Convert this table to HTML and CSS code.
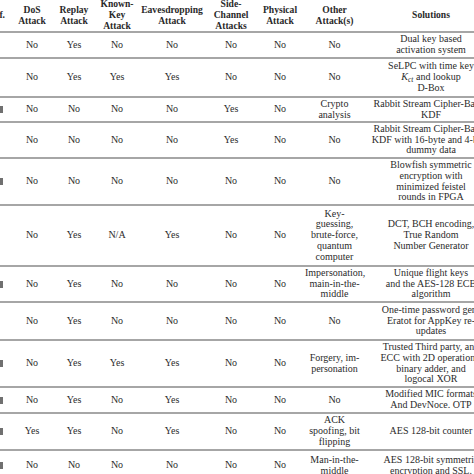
FILE: index.html
```html
<!DOCTYPE html>
<html>
<head>
<meta charset="utf-8">
<link rel="stylesheet" href="styles.css">
</head>
<body>
<div class="viewport">
<table class="grid">
  <colgroup>
    <col class="c-ref"><col class="c-dos"><col class="c-replay"><col class="c-known"><col class="c-eaves"><col class="c-side"><col class="c-phys"><col class="c-other"><col class="c-sol">
  </colgroup>
  <thead>
    <tr class="r35">
      <th class="ref-cell">Ref.</th>
      <th>DoS<br>Attack</th>
      <th>Replay<br>Attack</th>
      <th>Known-<br>Key<br>Attack</th>
      <th>Eavesdropping<br>Attack</th>
      <th>Side-<br>Channel<br>Attacks</th>
      <th>Physical<br>Attack</th>
      <th>Other<br>Attack(s)</th>
      <th>Solutions</th>
    </tr>
  </thead>
  <tbody>
    <tr class="r26">
      <td class="ref-cell"></td><td>No</td><td>Yes</td><td>No</td><td>No</td><td>No</td><td>No</td><td>No</td>
      <td>Dual key based<br>activation system</td>
    </tr>
    <tr class="r39">
      <td class="ref-cell"></td><td>No</td><td>Yes</td><td>Yes</td><td>Yes</td><td>No</td><td>No</td><td>No</td>
      <td>SeLPC with time key<br><i>K</i><span class="subs">ct</span> and lookup<br>D-Box</td>
    </tr>
    <tr class="r25">
      <td class="ref-cell"><span class="ref"></span></td><td>No</td><td>No</td><td>No</td><td>No</td><td>Yes</td><td>No</td><td>Crypto<br>analysis</td>
      <td>Rabbit Stream Cipher-Based<br>KDF</td>
    </tr>
    <tr class="r36">
      <td class="ref-cell"></td><td>No</td><td>No</td><td>No</td><td>No</td><td>Yes</td><td>No</td><td>No</td>
      <td>Rabbit Stream Cipher-Based<br>KDF with 16-byte and 4-byte<br>dummy data</td>
    </tr>
    <tr class="r47">
      <td class="ref-cell"><span class="ref"></span></td><td>No</td><td>No</td><td>No</td><td>No</td><td>No</td><td>No</td><td>No</td>
      <td>Blowfish symmetric<br>encryption with<br>minimized feistel<br>rounds in FPGA</td>
    </tr>
    <tr class="r61">
      <td class="ref-cell"></td><td>No</td><td>Yes</td><td>N/A</td><td>Yes</td><td>No</td><td>No</td>
      <td>Key-<br>guessing,<br>brute-force,<br>quantum<br>computer</td>
      <td>DCT, BCH encoding,<br>True Random<br>Number Generator</td>
    </tr>
    <tr class="r36">
      <td class="ref-cell"><span class="ref"></span></td><td>No</td><td>Yes</td><td>No</td><td>No</td><td>No</td><td>No</td>
      <td>Impersonation,<br>main-in-the-<br>middle</td>
      <td>Unique flight keys<br>and the AES-128 ECB<br>algorithm</td>
    </tr>
    <tr class="r38">
      <td class="ref-cell"></td><td>No</td><td>Yes</td><td>No</td><td>No</td><td>No</td><td>No</td><td>No</td>
      <td>One-time password gen-<br>Eratot for AppKey re-<br>updates</td>
    </tr>
    <tr class="r47">
      <td class="ref-cell"><span class="ref"></span></td><td>No</td><td>Yes</td><td>Yes</td><td>Yes</td><td>No</td><td>No</td>
      <td>Forgery, im-<br>personation</td>
      <td>Trusted Third party, and<br>ECC with 2D operations,<br>binary adder, and<br>logocal XOR</td>
    </tr>
    <tr class="r26">
      <td class="ref-cell"><span class="ref"></span></td><td>No</td><td>Yes</td><td>No</td><td>Yes</td><td>No</td><td>No</td><td>No</td>
      <td>Modified MIC formats<br>And DevNoce. OTP</td>
    </tr>
    <tr class="r37">
      <td class="ref-cell"><span class="ref"></span></td><td>Yes</td><td>Yes</td><td>No</td><td>Yes</td><td>No</td><td>No</td>
      <td>ACK<br>spoofing, bit<br>flipping</td>
      <td>AES 128-bit counter</td>
    </tr>
    <tr class="r31">
      <td class="ref-cell"><span class="ref"></span></td><td>No</td><td>No</td><td>No</td><td>No</td><td>No</td><td>No</td>
      <td>Man-in-the-<br>middle</td>
      <td>AES 128-bit symmetric<br>encryption and SSL.</td>
    </tr>
  </tbody>
</table>
</div>
</body>
</html>
```

FILE: styles.css
```css
html, body {
  margin: 0;
  padding: 0;
  background: #ffffff;
}

.viewport {
  width: 474px;
  height: 474px;
  overflow: hidden;
}

.grid {
  margin-left: -29px;
  margin-top: -2px;
  width: 525px;
  table-layout: fixed;
  border-collapse: separate;
  border-spacing: 0;
  font-family: "Liberation Serif", "Times New Roman", serif;
  font-size: 10px;
  line-height: 10.7px;
  color: #2b2b2b;
}

.c-ref { width: 40px; }
.c-dos { width: 42px; }
.c-replay { width: 42px; }
.c-known { width: 44px; }
.c-eaves { width: 66px; }
.c-side { width: 52px; }
.c-phys { width: 46px; }
.c-other { width: 63px; }
.c-sol { width: 130px; }

.grid th,
.grid td {
  padding: 0 2px;
  text-align: center;
  vertical-align: middle;
  border-bottom: 2px solid #a6a6a6;
  white-space: nowrap;
  overflow: visible;
}

.grid th {
  font-weight: bold;
  font-size: 9.6px;
  line-height: 11px;
  color: #2a2a2a;
}

.grid .ref-cell {
  text-align: right;
  padding-right: 8px;
}

.grid th.ref-cell {
  padding-right: 6px;
}

.ref {
  display: inline-block;
  width: 6px;
  height: 7px;
  background: #707070;
  vertical-align: middle;
}

.subs {
  display: inline-block;
  font-size: 7.5px;
  font-style: italic;
  line-height: 7px;
  vertical-align: -2px;
}

.r25 { height: 25px; }
.r26 { height: 26px; }
.r31 { height: 31px; }
.r35 { height: 35px; }
.r36 { height: 36px; }
.r37 { height: 37px; }
.r38 { height: 38px; }
.r39 { height: 39px; }
.r47 { height: 47px; }
.r61 { height: 61px; }
```
